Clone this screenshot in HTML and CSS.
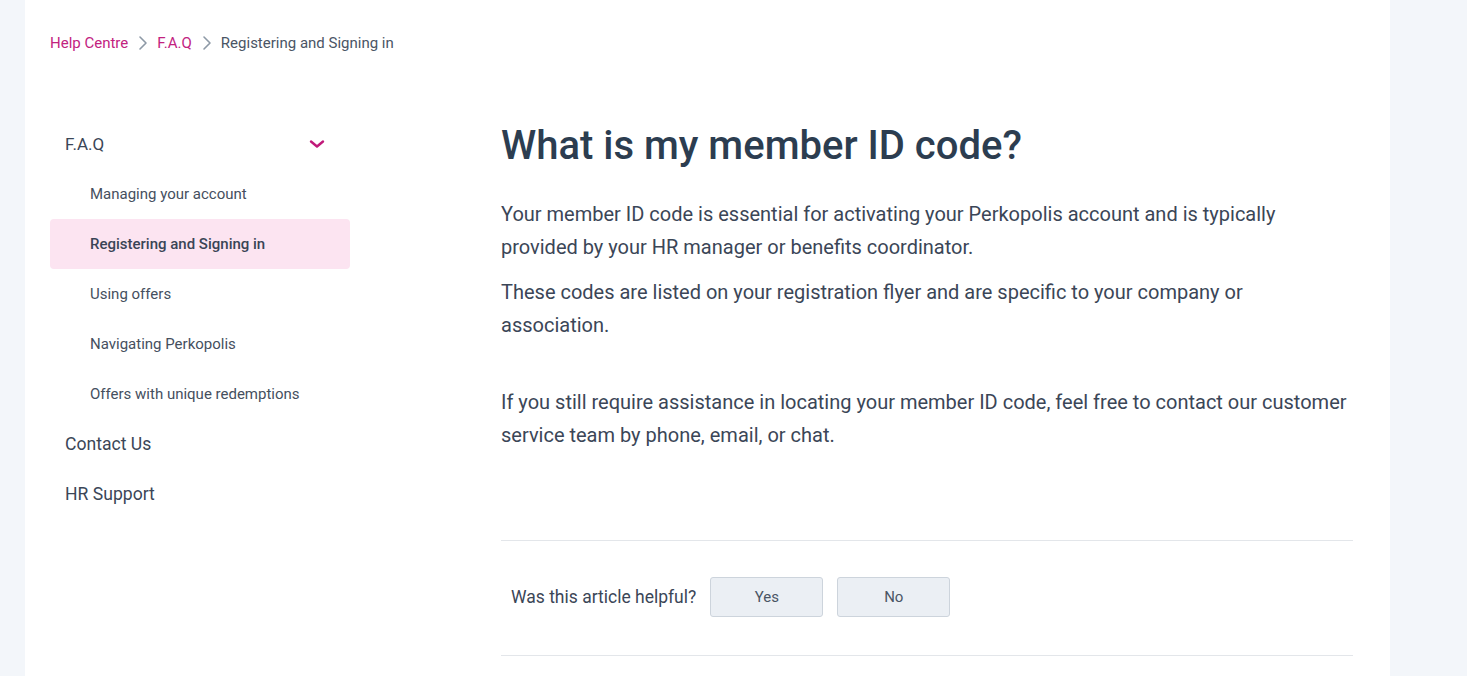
FILE: index.html
```html
<!DOCTYPE html>
<html lang="en">
<head>
<meta charset="utf-8">
<title>What is my member ID code?</title>
<link rel="stylesheet" href="styles.css">
</head>
<body>
<div class="page">
  <nav class="breadcrumb">
    <a href="#" class="crumb-link">Help Centre</a>
    <svg class="crumb-sep" width="10" height="16" viewBox="0 0 10 16"><path d="M2 2l6 6-6 6" fill="none" stroke="#8d99a6" stroke-width="1.6" stroke-linecap="round" stroke-linejoin="round"/></svg>
    <a href="#" class="crumb-link">F.A.Q</a>
    <svg class="crumb-sep" width="10" height="16" viewBox="0 0 10 16"><path d="M2 2l6 6-6 6" fill="none" stroke="#8d99a6" stroke-width="1.6" stroke-linecap="round" stroke-linejoin="round"/></svg>
    <span class="crumb-current">Registering and Signing in</span>
  </nav>
  <div class="layout">
    <aside class="sidebar">
      <div class="nav-top nav-group">
        <span>F.A.Q</span>
        <svg class="chev" width="16" height="10" viewBox="0 0 16 10"><path d="M2 2.5l6 5 6-5" fill="none" stroke="#c01a7a" stroke-width="2.4" stroke-linecap="round" stroke-linejoin="round"/></svg>
      </div>
      <a href="#" class="nav-sub">Managing your account</a>
      <a href="#" class="nav-sub active">Registering and Signing in</a>
      <a href="#" class="nav-sub">Using offers</a>
      <a href="#" class="nav-sub">Navigating Perkopolis</a>
      <a href="#" class="nav-sub">Offers with unique redemptions</a>
      <a href="#" class="nav-top">Contact Us</a>
      <a href="#" class="nav-top">HR Support</a>
    </aside>
    <main class="article">
      <h1 class="title">What is my member ID code?</h1>
      <p>Your member ID code is essential for activating your Perkopolis account and is typically provided by your HR manager or benefits coordinator.</p>
      <p>These codes are listed on your registration flyer and are specific to your company or association.</p>
      <p class="blank">&nbsp;</p>
      <p>If you still require assistance in locating your member ID code, feel free to contact our customer service team by phone, email, or chat.</p>
      <div class="feedback">
        <span class="feedback-label">Was this article helpful?</span>
        <button class="fb-btn">Yes</button>
        <button class="fb-btn">No</button>
      </div>
    </main>
  </div>
</div>
</body>
</html>
```

FILE: styles.css
```css
* { box-sizing: border-box; }
html, body { margin: 0; padding: 0; }
body {
  background: #f3f6fa;
  font-family: Roboto, "Liberation Sans", Arial, sans-serif;
  color: #3b4657;
}
.page {
  margin-left: 25px;
  width: 1365px;
  min-height: 676px;
  background: #fff;
  padding: 33px 37px 0 25px;
}
.breadcrumb {
  display: flex;
  align-items: center;
  height: 20px;
  font-size: 15px;
}
.crumb-link { color: #c2227f; text-decoration: none; }
.crumb-sep { margin: 0 9px 0 10px; }
.crumb-current { color: #4a5565; }
.layout {
  display: flex;
  margin-top: 66px;
}
.sidebar {
  width: 300px;
  flex: none;
  display: flex;
  flex-direction: column;
}
.nav-top, .nav-sub {
  height: 50px;
  display: flex;
  align-items: center;
  text-decoration: none;
  color: #3b4657;
}
.nav-top { padding-left: 15px; font-size: 17.6px; }
.nav-group { justify-content: space-between; padding-right: 25px; font-size: 17px; }
.nav-sub { padding-left: 40px; font-size: 15px; color: #454f5e; }
.nav-sub.active {
  background: #fce4f1;
  border-radius: 4px;
  font-weight: 500;
  color: #3a4456;
}
.article {
  margin-left: 151px;
  width: 852px;
}
.title {
  margin: 5px 0 30px;
  font-size: 40px;
  line-height: 44px;
  font-weight: 500;
  color: #2c3d50;
}
.article p {
  margin: 0 0 13px;
  font-size: 20px;
  line-height: 32.5px;
  color: #3b4657;
}
.article p.blank { line-height: 19px; height: 19px; }
.feedback {
  margin-top: 89px;
  border-top: 1px solid #e3e6ea;
  border-bottom: 1px solid #e3e6ea;
  padding: 36px 0 38px 10px;
  display: flex;
  align-items: center;
  gap: 14px;
}
.feedback-label { font-size: 17.5px; color: #3b4657; }
.fb-btn {
  width: 113px;
  height: 40px;
  background: #ebeff4;
  border: 1px solid #cdd4dc;
  border-radius: 3px;
  font-family: Roboto, "Liberation Sans", Arial, sans-serif;
  font-size: 15px;
  color: #4a5565;
}
```
